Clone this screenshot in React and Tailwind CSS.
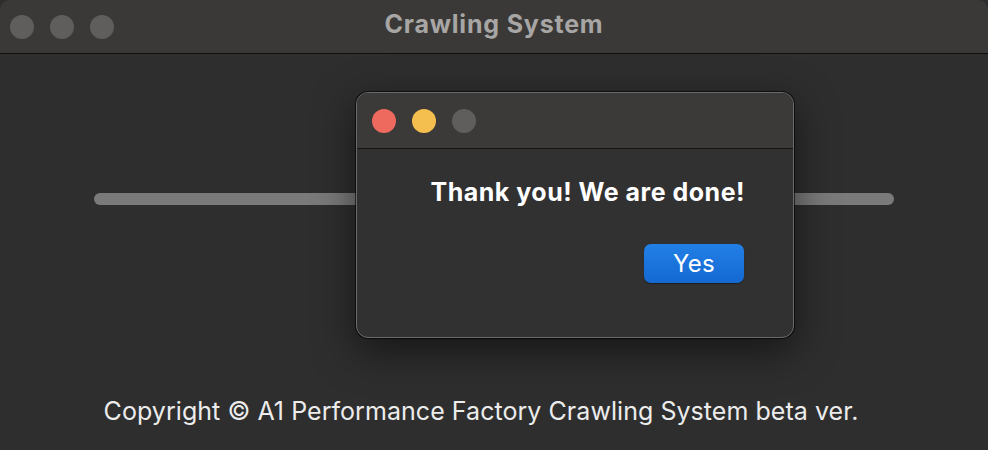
import React from 'react'

// Window-style traffic light buttons
function TrafficLights({ colors }) {
  return (
    <div className="flex items-center gap-4">
      {colors.map((c, i) => (
        <span key={i} className={`block w-6 h-6 rounded-full ${c}`}></span>
      ))}
    </div>
  )
}

function DoneDialog() {
  return (
    <div className="absolute left-[356px] top-[92px] w-[438px] h-[246px] rounded-[12px] border border-[#6b6b6b] bg-[#323131] shadow-[0_12px_40px_rgba(0,0,0,0.55),0_0_0_1px_rgba(0,0,0,0.6)] overflow-hidden">
      <div className="h-[56px] bg-[#3b3a38] border-b border-[#141414] flex items-center pl-[15px]">
        <TrafficLights colors={['bg-[#ee6a5f]', 'bg-[#f5bf4f]', 'bg-[#5f5e5c]']} />
      </div>
      <div className="flex flex-col items-end pr-[49px]">
        <div className="mt-[31px] mr-[-1px] text-white text-[25px] font-bold leading-none tracking-[0.5px]">
          Thank you! We are done!
        </div>
        <button className="mt-[39px] w-[100px] h-[39px] rounded-[7px] bg-gradient-to-b from-[#2280e6] to-[#1468d2] text-white text-[24px] leading-none tracking-[0.3px] shadow-[0_1px_1px_rgba(0,0,0,0.4)]">
          Yes
        </button>
      </div>
    </div>
  )
}

export default function App() {
  return (
    <div className="relative w-[988px] h-[450px] bg-[#2e2e2e] overflow-hidden font-['Inter','Liberation_Sans',sans-serif]">
      {/* Main window title bar */}
      <div className="h-[54px] bg-[#3a3937] border-b border-[#0e0e0e] rounded-tl-[10px] rounded-tr-[10px] flex items-center pl-[10px] relative">
        <TrafficLights colors={['bg-[#5f5e5c]', 'bg-[#5f5e5c]', 'bg-[#5f5e5c]']} />
        <div className="absolute inset-0 flex items-center justify-center pb-[5px] text-[#a7a6a4] text-[25px] leading-none font-bold tracking-[0.8px]">
          Crawling System
        </div>
      </div>

      {/* Window body */}
      <div className="flex flex-col items-center">
        <div className="mt-[139px] w-[800px] h-[12px] rounded-full bg-[#7a7a7a]"></div>
        <div className="mt-[194px] mr-[26px] text-[#ececec] text-[25px] leading-none tracking-[0.05px]">
          Copyright © A1 Performance Factory Crawling System beta ver.
        </div>
      </div>

      <DoneDialog />
    </div>
  )
}
